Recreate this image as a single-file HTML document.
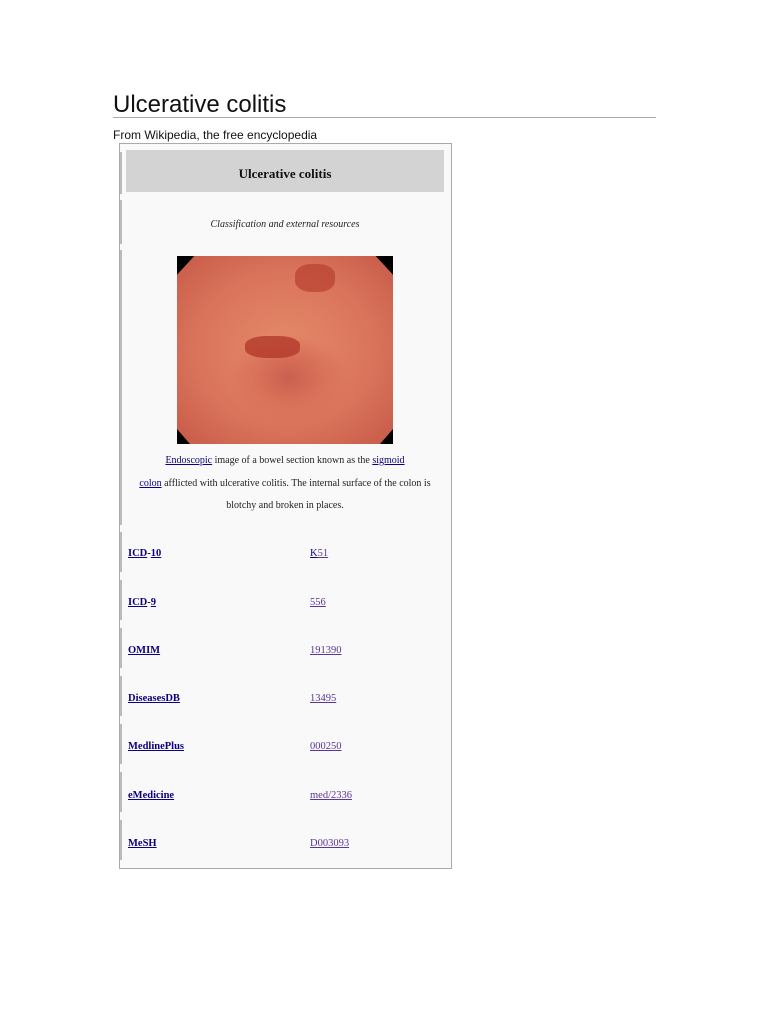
<!DOCTYPE html>
<html><head><meta charset="utf-8"><style>
body{margin:0;background:#fff;width:768px;height:1024px;position:relative;font-family:"Liberation Serif",serif}
.a{position:absolute}
h1{position:absolute;left:113px;top:91px;margin:0;font:400 24px "Liberation Sans",sans-serif;color:#111}
.hr{left:113px;top:117px;width:543px;height:1px;background:#aaa}
.sub{left:113px;top:128px;font:12px "Liberation Sans",sans-serif;color:#111}
.box{left:119px;top:143px;width:331px;height:724px;background:#f9f9f9;border:1px solid #aaa}
.hd{left:126px;top:150px;width:318px;height:42px;background:#d3d3d3;text-align:center;line-height:48px;font-weight:bold;font-size:13px;color:#111}
.bar{left:120px;width:2px;background:#bbb}
a{color:#0b0080;text-decoration:underline}
.l{font-weight:bold;font-size:10.5px}
.v{font-size:10.5px;color:#5a3696}
.cap{left:126px;top:450px;width:318px;text-align:center;font-size:10px;line-height:22.5px;color:#222}
</style></head><body>
<h1>Ulcerative colitis</h1>
<div class="a hr"></div>
<div class="a sub">From Wikipedia, the free encyclopedia</div>
<div class="a box"></div>
<div class="a bar" style="top:152px;height:42px"></div>
<div class="a bar" style="top:200px;height:44px"></div>
<div class="a bar" style="top:250px;height:275px"></div>
<div class="a bar" style="top:532px;height:40px"></div>
<div class="a bar" style="top:580px;height:40px"></div>
<div class="a bar" style="top:628px;height:40px"></div>
<div class="a bar" style="top:676px;height:40px"></div>
<div class="a bar" style="top:724px;height:40px"></div>
<div class="a bar" style="top:772px;height:40px"></div>
<div class="a bar" style="top:820px;height:40px"></div>
<div class="a hd">Ulcerative colitis</div>
<div class="a" style="left:126px;top:219px;width:318px;text-align:center;font-style:italic;font-size:10px;color:#222">Classification and external resources</div>
<div class="a" style="left:177px;top:256px;width:216px;height:188px;background:#000;overflow:hidden">
<div style="position:absolute;inset:0;background:radial-gradient(ellipse 60px 45px at 52% 65%,#c96050 0%,#d87058 50%,transparent 100%),radial-gradient(ellipse at 50% 50%,#e58a6a 0%,#d9735a 60%,#c65a48 100%);clip-path:polygon(8% 0,92% 0,100% 10%,100% 92%,94% 100%,6% 100%,0 92%,0 10%)"></div>
<div style="position:absolute;left:68px;top:80px;width:55px;height:22px;background:#b33a2a;border-radius:40%;opacity:.8"></div>
<div style="position:absolute;left:118px;top:8px;width:40px;height:28px;background:#b84030;border-radius:40%;opacity:.7"></div>
</div>
<div class="a cap"><a href="#">Endoscopic</a> image of a bowel section known as the <a href="#">sigmoid<br>colon</a> afflicted with ulcerative colitis. The internal surface of the colon is<br>blotchy and broken in places.</div>
<div class="a l" style="left:128px;top:548px"><a href="#">ICD</a>-<a href="#">10</a></div><div class="a v" style="left:310px;top:548px"><a href="#" style="color:#0b0080">K</a><a href="#" style="color:#5a3696">51</a></div>
<div class="a l" style="left:128px;top:597px"><a href="#">ICD</a>-<a href="#">9</a></div><div class="a v" style="left:310px;top:597px"><a href="#" style="color:#5a3696">556</a></div>
<div class="a l" style="left:128px;top:645px"><a href="#">OMIM</a></div><div class="a v" style="left:310px;top:645px"><a href="#" style="color:#5a3696">191390</a></div>
<div class="a l" style="left:128px;top:693px"><a href="#">DiseasesDB</a></div><div class="a v" style="left:310px;top:693px"><a href="#" style="color:#5a3696">13495</a></div>
<div class="a l" style="left:128px;top:741px"><a href="#">MedlinePlus</a></div><div class="a v" style="left:310px;top:741px"><a href="#" style="color:#5a3696">000250</a></div>
<div class="a l" style="left:128px;top:790px"><a href="#">eMedicine</a></div><div class="a v" style="left:310px;top:790px"><a href="#" style="color:#5a3696">med/2336</a></div>
<div class="a l" style="left:128px;top:838px"><a href="#">MeSH</a></div><div class="a v" style="left:310px;top:838px"><a href="#" style="color:#5a3696">D003093</a></div>
</body></html>
